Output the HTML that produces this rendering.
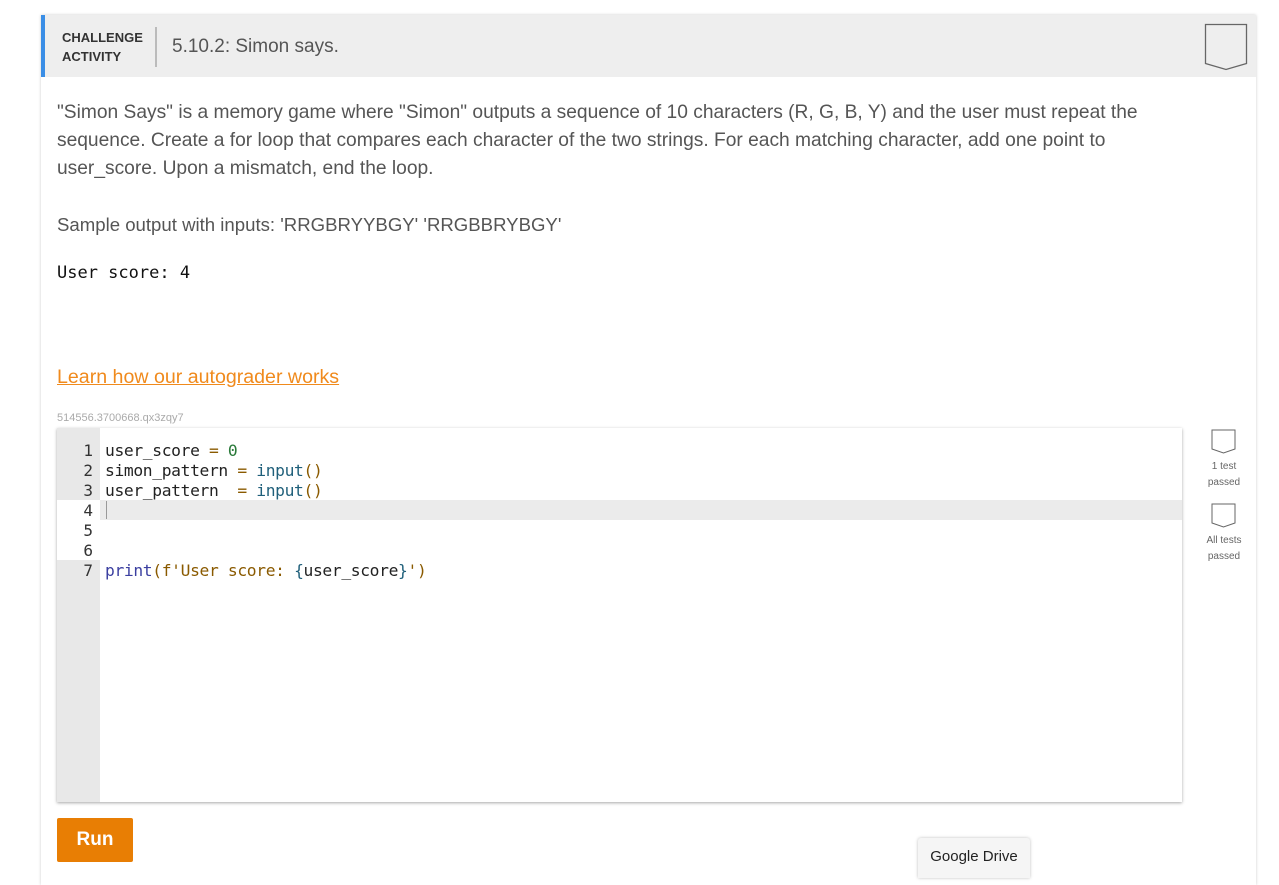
<!DOCTYPE html>
<html><head><style>
body{margin:0;background:#fff;font-family:"Liberation Sans",sans-serif;width:1279px;height:876px;overflow:hidden;position:relative}
.card{position:absolute;left:41px;top:15px;width:1215px;height:870px;background:#fff;box-shadow:0 0 3px rgba(0,0,0,.2)}
.hdr{position:absolute;left:0;top:0;width:1215px;height:62px;background:#eeeeee;border-left:4px solid #3a8ee6;box-sizing:border-box}
.lbl{position:absolute;left:17px;top:13px;font-size:13px;font-weight:bold;color:#333;line-height:19px}
.sep{position:absolute;left:110px;top:12px;width:2px;height:40px;background:#bbb}
.title{position:absolute;left:127px;top:21px;font-size:19px;color:#555}
.p{position:absolute;left:16px;font-size:19.2px;color:#555;line-height:28px;width:1110px}
.ed{position:absolute;left:16px;top:413px;width:1125px;height:374px;background:#fff;box-shadow:0 1px 3px rgba(0,0,0,.35)}
.gut{position:absolute;left:0;top:0;width:43px;height:374px;background:#e8e8e8}
.ln{position:absolute;left:0;width:36px;text-align:right;font-size:16px;color:#333;font-family:"DejaVu Sans Mono",monospace}
.cd{position:absolute;left:48px;font-size:16.3px;color:#222;font-family:"DejaVu Sans Mono",monospace;white-space:pre;letter-spacing:-0.35px}
.g{color:#2a7a3a}.b{color:#1f5f7a}.o{color:#8a5a00}.v{color:#3b3fa0}
.small{position:absolute;font-size:10px;color:#666;text-align:center;width:50px;line-height:16px}
</style></head><body>
<div class="card">
<div class="hdr">
<div class="lbl">CHALLENGE<br>ACTIVITY</div>
<div class="sep"></div>
<div class="title">5.10.2: Simon says.</div>
<svg style="position:absolute;left:1159px;top:8px" width="44" height="48"><path d="M1.5 1.5H42.5V40.5L22 46.5L1.5 40.5Z" fill="none" stroke="#666" stroke-width="1.3"/></svg>
</div>
<div class="p" style="top:84px">"Simon Says" is a memory game where "Simon" outputs a sequence of 10 characters (R, G, B, Y) and the user must repeat the sequence. Create a for loop that compares each character of the two strings. For each matching character, add one point to user_score. Upon a mismatch, end the loop.</div>
<div class="p" style="top:196px;font-size:18.6px">Sample output with inputs: 'RRGBRYYBGY' 'RRGBBRYBGY'</div>
<div class="p" style="top:244px;font-size:17px;color:#111;font-family:'DejaVu Sans Mono',monospace">User score: 4</div>
<div class="p" style="top:348px;color:#f08a1c;text-decoration:underline;font-size:19.6px">Learn how our autograder works</div>
<div style="position:absolute;left:16px;top:397px;font-size:11px;color:#aaa">514556.3700668.qx3zqy7</div>
<div class="ed">
<div class="gut"></div>
<div style="position:absolute;left:0;top:72px;width:43px;height:60px;background:#fff"></div>
<div style="position:absolute;left:43px;top:72px;width:1082px;height:20px;background:#ebebeb"></div>
<div style="position:absolute;left:49px;top:73px;width:1px;height:18px;background:#999"></div>
<div class="ln" style="top:13px">1</div><div class="ln" style="top:33px">2</div><div class="ln" style="top:53px">3</div><div class="ln" style="top:73px">4</div><div class="ln" style="top:93px">5</div><div class="ln" style="top:113px">6</div><div class="ln" style="top:133px">7</div>
<div class="cd" style="top:13px">user_score <span class="o">=</span> <span class="g">0</span></div>
<div class="cd" style="top:33px">simon_pattern <span class="o">=</span> <span class="b">input</span><span class="o">()</span></div>
<div class="cd" style="top:53px">user_pattern  <span class="o">=</span> <span class="b">input</span><span class="o">()</span></div>
<div class="cd" style="top:133px"><span class="v">print</span><span class="o">(</span><span class="o">f'User score: </span><span class="b">{</span>user_score<span class="b">}</span><span class="o">')</span></div>
</div>
<svg style="position:absolute;left:1170px;top:414px" width="26" height="26"><path d="M1 1H24V20L12.5 24L1 20Z" fill="none" stroke="#666"/></svg>
<div class="small" style="left:1158px;top:444px">1 test<br>passed</div>
<svg style="position:absolute;left:1170px;top:488px" width="26" height="26"><path d="M1 1H24V20L12.5 24L1 20Z" fill="none" stroke="#666"/></svg>
<div class="small" style="left:1158px;top:518px">All tests<br>passed</div>
<div style="position:absolute;left:16px;top:803px;width:76px;height:44px;background:#e87e04;color:#fff;font-weight:bold;font-size:19px;line-height:44px;text-align:center;border-radius:2px">Run</div>
</div>
<div style="position:absolute;left:918px;top:838px;width:112px;height:40px;background:#f5f5f5;box-shadow:0 0 3px rgba(0,0,0,.25);font-size:15px;color:#222;line-height:38px;text-align:center;border-radius:3px 3px 0 0">Google Drive</div>
</body></html>
